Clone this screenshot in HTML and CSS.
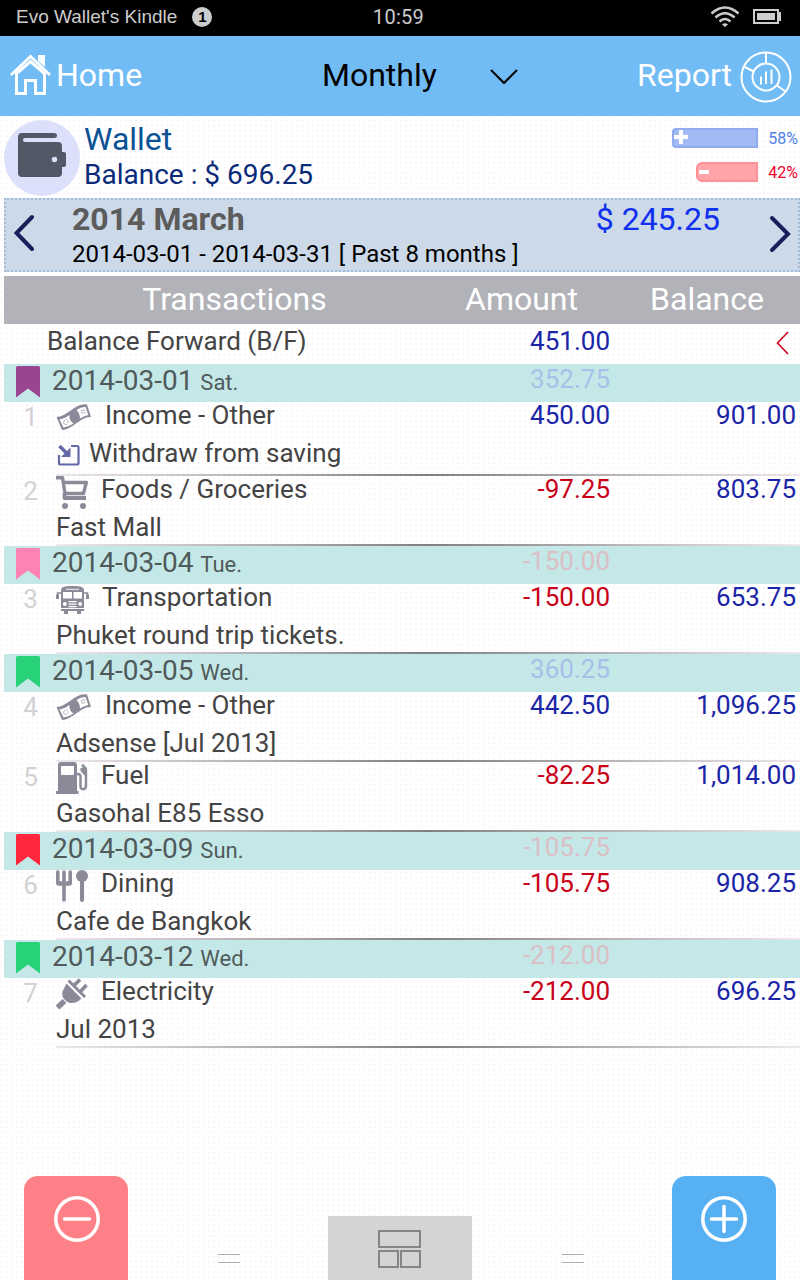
FILE: index.html
```html
<!DOCTYPE html>
<html lang="en">
<head>
  <meta charset="UTF-8" />
  <meta name="viewport" content="width=device-width, initial-scale=1.0" />
  <title>Evo Wallet</title>
  <link rel="stylesheet" href="styles.css">
</head>
<body>
  <svg class="defs" width="0" height="0">
    <symbol id="flag" viewBox="0 0 24 32"><path d="M1.500 0h21q1.500 0 1.500 1.500V31.500L12 22.500 0 31.500V1.500Q0 0 1.500 0z"/></symbol>
    <symbol id="cash" viewBox="0 0 36 28">
      <path d="M.5 14C11 14 20-1 31 1.500L35 14C25 13 16 27 6 27z" fill="#8b8a99"/>
      <path d="M3.500 16.500q5-.5 10-4.500-.5 6 4 8.500-5 3.500-10 4zM20.500 7q5-3.500 9-3l2.800 8q-4 .5-8.300 3.500 0-5-3.500-8.500z" fill="#fff"/>
      <path d="M7.500 18.500l3-2 2 2.500-2 2.500-2.500-.5zM25 8l3-1.500 1 3-2.500 1z" fill="none" stroke="#9c9ba9" stroke-width="1" stroke-dasharray="2 1"/>
    </symbol>
  </svg>

  <div class="statusbar">
    <div class="device">Evo Wallet's Kindle <span class="count">1</span></div>
    <div class="clock">10:59</div>
    <div class="status-icons">
      <svg width="30" height="22" viewBox="0 0 30 22" fill="none" stroke="#ccc" stroke-width="2.500">
        <path d="M1.500 7.500Q15-4.500 28.500 7.500M5.500 11.500Q15 3 24.500 11.500M9.500 15.500Q15 10.500 20.500 15.500"/>
        <path d="M12 18.500q3-2.500 6 0l-3 2.500z" fill="#ccc" stroke="none"/>
      </svg>
      <svg width="28" height="15" viewBox="0 0 28 15" fill="#ccc">
        <path d="M1 1h24v13H1z" fill="none" stroke="#ccc" stroke-width="2"/>
        <path d="M4 4h18v7H4zM26 3h2v9h-2z"/>
      </svg>
    </div>
  </div>

  <div class="topbar">
    <div class="home">
      <svg width="42" height="42" viewBox="0 0 42 42" fill="none" stroke="#fff">
        <path d="M1 21L20.500 2.500 40 21" stroke-width="2.800"/>
        <path d="M6.500 19.500V39.500h9V26.500h10v13h9V19.500L20.500 7.500z" stroke-width="3"/>
        <path d="M28 1h7v12l-7-6z" fill="#fff" stroke="none"/>
      </svg>
      <span>Home</span>
    </div>
    <div class="mode">
      <span>Monthly</span>
      <svg width="28" height="16" viewBox="0 0 28 16" fill="none" stroke="#000" stroke-width="2"><path d="M1 1l13 13L27 1"/></svg>
    </div>
    <div class="report">
      <span>Report</span>
      <svg width="52" height="52" viewBox="0 0 52 52" fill="none" stroke="#fff" stroke-width="2">
        <circle cx="26" cy="26" r="24.500"/>
        <circle cx="26" cy="26" r="13.500"/>
        <path d="M26 1.500v11M4.500 16l9.500 4.500M37 34.500l8.500 6M21 25.500v8M26 20.500v12.500M31.500 18.500V33"/>
      </svg>
    </div>
  </div>

  <div class="wallet">
    <div class="avatar">
      <svg width="48" height="44" viewBox="0 0 48 44" fill="#535866">
        <path d="M4 0h32q3 0 3 2.500T36 5H7q-2 0-2 2t2 2h33q4 0 4 4v6h2q2 0 2 2v11q0 2-2 2h-2v6q0 4-4 4H4q-4 0-4-4V4q0-4 4-4z"/>
        <circle cx="36.500" cy="26.500" r="2.700" fill="#dce0fa"/>
      </svg>
    </div>
    <div class="wallet-text">
      <div class="wallet-name">Wallet</div>
      <div class="wallet-balance">Balance : $ 696.25</div>
    </div>
    <div class="ratio">
      <div class="ratio-row plus">
        <div class="bar"><svg width="14" height="14" viewBox="0 0 14 14" fill="none" stroke="#fff" stroke-width="4"><path d="M0 7h14M7 0v14"/></svg></div>
        <span>58%</span>
      </div>
      <div class="ratio-row minus">
        <div class="bar"><svg width="10" height="14" viewBox="0 0 10 14" fill="none" stroke="#fff" stroke-width="4"><path d="M0 8h10"/></svg></div>
        <span>42%</span>
      </div>
    </div>
  </div>

  <div class="period">
    <svg class="prev" width="20" height="38" viewBox="0 0 20 38" fill="none" stroke="#181f5b" stroke-width="4" stroke-linecap="round"><path d="M18 3L2.500 19 18 35"/></svg>
    <div class="period-text">
      <div class="period-top"><b>2014 March</b><span class="period-sum">$ 245.25</span></div>
      <div class="period-range">2014-03-01 - 2014-03-31 [ Past 8 months ]</div>
    </div>
    <svg class="next" width="22" height="38" viewBox="0 0 22 38" fill="none" stroke="#181f5b" stroke-width="4" stroke-linecap="round"><path d="M3 3l16 16L3 35"/></svg>
  </div>

  <div class="table">
    <div class="thead">
      <span>Transactions</span><span>Amount</span><span>Balance</span>
    </div>

    <div class="forward">
      <span class="forward-name">Balance Forward (B/F)</span>
      <span class="num in">451.00</span>
      <svg width="13" height="24" viewBox="0 0 13 24" fill="none" stroke="#d0021b" stroke-width="1.600"><path d="M12 1L1.500 12 12 23"/></svg>
    </div>

    <div class="day">
      <svg class="flag purple"><use href="#flag"/></svg>
      <span class="date">2014-03-01 <small>Sat.</small></span>
      <span class="num day-in">352.75</span>
    </div>
    <div class="row row-tall">
      <span class="idx">1</span>
      <div class="cat">
        <svg class="cash" width="36" height="28"><use href="#cash"/></svg>
        <span>Income - Other</span>
      </div>
      <span class="num in">450.00</span>
      <span class="num in">901.00</span>
      <div class="note">
        <svg width="24" height="24" viewBox="0 0 24 24" fill="none" stroke="#6468a8" stroke-width="2.200">
          <path d="M3 12v8q0 1.500 1.500 1.500H21q1.500 0 1.500-1.500V4.500Q22.500 3 21 3h-6"/>
          <path d="M3.500 3l8 8" stroke-width="3.600"/>
          <path d="M14.500 4.500v9.500H5z" fill="#6468a8" stroke="none"/>
        </svg>
        <span>Withdraw from saving</span>
      </div>
    </div>
    <div class="row">
      <span class="idx">2</span>
      <div class="cat">
        <svg width="32" height="34" viewBox="0 0 32 34" fill="none" stroke="#8b8a99" stroke-width="3.400" stroke-linejoin="round">
          <path d="M0 1.700h6.500L9 17.500h18.500L30.300 6.500H8"/>
          <path d="M8.500 17v5h21.500" stroke-width="3.800"/>
          <circle cx="9" cy="30" r="3" fill="#8b8a99" stroke="none"/>
          <circle cx="27" cy="30" r="3" fill="#8b8a99" stroke="none"/>
        </svg>
        <span>Foods / Groceries</span>
      </div>
      <span class="num out">-97.25</span>
      <span class="num in">803.75</span>
      <div class="note">Fast Mall</div>
    </div>

    <div class="day">
      <svg class="flag pink"><use href="#flag"/></svg>
      <span class="date">2014-03-04 <small>Tue.</small></span>
      <span class="num day-out">-150.00</span>
    </div>
    <div class="row">
      <span class="idx">3</span>
      <div class="cat">
        <svg class="bus" width="33" height="28" viewBox="0 0 33 28" fill="#8b8a99">
          <path d="M9 .5Q16.500-.8 24 .5q4 .7 4 4V22H5V4.500q0-3.300 4-4zM5 23h23v2h-3v3h-4v-3h-9v3H8v-3H5z"/>
          <path d="M7 6h9v6.500H7zM17.500 6H26v6.500h-8.500zM12.500 15h8v1.200h-8zM12.500 17.500h8v1.200h-8zM12.500 20h8v1.200h-8z" fill="#fff"/>
          <circle cx="8.800" cy="18" r="1.900" fill="#fff"/><circle cx="24.200" cy="18" r="1.900" fill="#fff"/>
          <path d="M10 3.300h13" stroke="#fff" stroke-width=".9"/>
          <path d="M5 7H1.500v6M28 7h3.500v6" fill="none" stroke="#8b8a99" stroke-width="1.500"/>
          <path d="M0 8.500h3V13H0zM30 8.500h3V13h-3z"/>
        </svg>
        <span>Transportation</span>
      </div>
      <span class="num out">-150.00</span>
      <span class="num in">653.75</span>
      <div class="note">Phuket round trip tickets.</div>
    </div>

    <div class="day">
      <svg class="flag green"><use href="#flag"/></svg>
      <span class="date">2014-03-05 <small>Wed.</small></span>
      <span class="num day-in">360.25</span>
    </div>
    <div class="row">
      <span class="idx">4</span>
      <div class="cat">
        <svg class="cash" width="36" height="28"><use href="#cash"/></svg>
        <span>Income - Other</span>
      </div>
      <span class="num in">442.50</span>
      <span class="num in">1,096.25</span>
      <div class="note">Adsense [Jul 2013]</div>
    </div>
    <div class="row">
      <span class="idx">5</span>
      <div class="cat">
        <svg width="32" height="34" viewBox="0 0 32 34" fill="#8b8a99">
          <path fill-rule="evenodd" d="M5 0h13q3 0 3 3v26h1.500v3H0v-3h2V3q0-3 3-3zM6 4q-1 0-1 1v7q0 1 1 1h11q1 0 1-1V5q0-1-1-1z"/>
          <path d="M21 12h1q2.500 0 2.500 2.500V24q0 3.200 2.700 3.200T30 24V8l-4-5" fill="none" stroke="#8b8a99" stroke-width="2.400"/>
          <path d="M26 1l5 5v8h-2l-4.500-5V6H28z"/>
        </svg>
        <span>Fuel</span>
      </div>
      <span class="num out">-82.25</span>
      <span class="num in">1,014.00</span>
      <div class="note">Gasohal E85 Esso</div>
    </div>

    <div class="day">
      <svg class="flag red"><use href="#flag"/></svg>
      <span class="date">2014-03-09 <small>Sun.</small></span>
      <span class="num day-out">-105.75</span>
    </div>
    <div class="row">
      <span class="idx">6</span>
      <div class="cat">
        <svg width="32" height="34" viewBox="0 0 32 34" fill="none" stroke="#8b8a99" stroke-width="4" stroke-linecap="round">
          <path d="M1.800 2v11M8 2v28M14.200 2v11" stroke-width="3.600"/>
          <path d="M2.500 13.500h11" stroke-width="4.500"/>
          <path d="M26 10v20"/>
          <circle cx="26" cy="6" r="6" fill="#8b8a99" stroke="none"/>
        </svg>
        <span>Dining</span>
      </div>
      <span class="num out">-105.75</span>
      <span class="num in">908.25</span>
      <div class="note">Cafe de Bangkok</div>
    </div>

    <div class="day">
      <svg class="flag green"><use href="#flag"/></svg>
      <span class="date">2014-03-12 <small>Wed.</small></span>
      <span class="num day-out">-212.00</span>
    </div>
    <div class="row">
      <span class="idx">7</span>
      <div class="cat">
        <svg width="32" height="34" viewBox="0 0 32 34" fill="none" stroke="#8b8a99" stroke-width="3">
          <path d="M17.500 8L24 1.500M24 14l6.500-7" stroke-width="3.600"/>
          <path d="M12.500 2.500L29 19"/>
          <path d="M10.500 5.500L25.500 20.500Q21 25.500 14 25L10.500 23.500Q5 19.500 6.500 13.500z" fill="#8b8a99" stroke="none"/>
          <path d="M1.500 29.500l7-6.500" stroke-width="5.500"/>
        </svg>
        <span>Electricity</span>
      </div>
      <span class="num out">-212.00</span>
      <span class="num in">696.25</span>
      <div class="note">Jul 2013</div>
    </div>
  </div>

  <div class="bottombar">
    <button class="btn-add btn-expense">
      <svg width="46" height="46" viewBox="0 0 46 46" fill="none" stroke="#fff" stroke-width="3.500" stroke-linecap="round"><circle cx="23" cy="23" r="21.200"/><path d="M10.500 23h25"/></svg>
    </button>
    <div class="handle"></div>
    <div class="panel">
      <svg width="44" height="38" viewBox="0 0 44 38" fill="none" stroke="#858585" stroke-width="2"><path d="M1 1h41v16H1zM1 21h19v16H1zM23 21h19v16H23z"/></svg>
    </div>
    <div class="handle"></div>
    <button class="btn-add btn-income">
      <svg width="46" height="46" viewBox="0 0 46 46" fill="none" stroke="#fff" stroke-width="3.500" stroke-linecap="round"><circle cx="23" cy="23" r="21.200"/><path d="M10.500 23h25M23 10.500v25"/></svg>
    </button>
  </div>
</body>
</html>
```
FILE: styles.css
```css
* {
  box-sizing: border-box;
}

body {
  margin: 0;
  width: 800px;
  height: 1280px;
  display: flex;
  flex-direction: column;
  overflow: hidden;
  font-family: Roboto, sans-serif;
  font-size: 26px;
  color: #444;
  background: #fff radial-gradient(circle, #f7f3f5 1px, transparent 1.2px) 4px 4px / 5.2px 5.2px;
}

svg {
  display: block;
  flex: none;
}

.defs {
  position: absolute;
}

/* status bar */
.statusbar {
  height: 36px;
  display: grid;
  grid-template-columns: 1fr auto 1fr;
  align-items: center;
  padding: 0 19px 3px 16px;
  background: #000;
  color: #ccc;
  font-family: "Liberation Sans", sans-serif;
  font-size: 19px;
}

.device {
  display: flex;
  align-items: center;
}

.count {
  width: 20px;
  height: 20px;
  margin-left: 15px;
  border-radius: 50%;
  background: #ccc;
  color: #000;
  font-size: 15px;
  font-weight: bold;
  line-height: 20px;
  text-align: center;
}

.clock {
  font-family: Roboto, sans-serif;
  font-size: 20px;
  letter-spacing: 0.3px;
}

.status-icons {
  display: flex;
  justify-content: flex-end;
  align-items: center;
  gap: 13px;
}

/* top navigation */
.topbar {
  height: 80px;
  display: grid;
  grid-template-columns: 322px 1fr auto;
  align-items: center;
  padding-right: 8px;
  background: #72bcf5;
  color: #fff;
  font-size: 32px;
  line-height: 78px;
}

.home,
.mode,
.report {
  display: flex;
  align-items: center;
  height: 80px;
}

.home {
  padding-left: 10px;
  gap: 4px;
}

.home svg {
  margin-bottom: 3px;
}

.home span,
.mode span,
.report span {
  height: 80px;
}

.mode {
  color: #000;
  gap: 53px;
}

.mode svg {
  margin-top: 2px;
}

.report {
  gap: 8px;
}

.report svg {
  margin-top: 2px;
}

/* wallet summary */
.wallet {
  height: 82px;
  display: flex;
  padding: 4px 2px 0 4px;
}

.avatar {
  width: 76px;
  height: 76px;
  border-radius: 50%;
  padding: 13px 0 0 14px;
  background: #dce0fa;
}

.wallet-text {
  flex: 1;
  padding-left: 4px;
}

.wallet-name {
  font-size: 32px;
  line-height: 38px;
  color: #0b5394;
}

.wallet-balance {
  font-size: 28px;
  line-height: 33px;
  color: #0a2a7a;
}

.ratio {
  padding-top: 8px;
}

.ratio-row {
  display: flex;
  justify-content: flex-end;
  align-items: center;
  height: 20px;
  margin-bottom: 14px;
  font-size: 16px;
}

.ratio-row span {
  width: 40px;
  text-align: right;
}

.bar {
  height: 20px;
  border: 2px solid;
}

.plus {
  color: #5080e8;
}

.plus .bar {
  width: 86px;
  background: #a2bbf5;
  border-color: #8facf0;
  border-radius: 4px 0 0 4px;
}

.minus {
  color: #f0002a;
}

.minus .bar {
  width: 62px;
  background: #ffa4a8;
  border-color: #ff9095;
  border-radius: 6px 0 0 6px;
  padding: 0 1px;
}

/* period selector */
.period {
  height: 74px;
  margin: 0 0 4px 4px;
  display: flex;
  align-items: center;
  border: 2px dotted #a3bdd8;
  background: #cbd9e9;
}

.prev {
  margin: 0 0 5px 8px;
}

.period-text {
  flex: 1;
  align-self: flex-start;
  padding-left: 38px;
}

.period-top {
  display: flex;
  justify-content: space-between;
  font-size: 32px;
  line-height: 38px;
  color: #5c5c5c;
}

.period-sum {
  margin-right: 49px;
  color: #1030f0;
}

.period-range {
  font-size: 24px;
  line-height: 32px;
  color: #000;
}

.next {
  margin: 0 7px 3px 0;
}

/* transactions */
.table {
  margin-left: 4px;
}

.thead {
  height: 48px;
  display: grid;
  grid-template-columns: 461px 112px 1fr;
  text-align: center;
  font-size: 32px;
  line-height: 46px;
  background: #b2b3b9;
  color: #fff;
}

.thead span:last-child {
  padding-left: 37px;
}

.forward,
.day,
.row {
  display: grid;
  grid-template-columns: 52px 384px 170px 1fr;
  padding-right: 4px;
}

.forward {
  height: 40px;
  line-height: 34px;
}

.forward-name {
  grid-column: 1 / 3;
  padding-left: 43px;
}

.forward svg {
  justify-self: end;
  margin: 7px 7px 0 0;
}

.num {
  text-align: right;
}

.in {
  color: #1a25a8;
}

.out {
  color: #c80018;
}

.day {
  height: 38px;
  grid-template-columns: 48px 388px 170px 1fr;
  background: #c4e8e8;
  line-height: 30px;
}

.day-in {
  color: #a8c0e8;
}

.day-out {
  color: #dbbfc4;
}

.flag {
  width: 24px;
  height: 32px;
  margin: 2px 0 0 12px;
}

.purple { fill: #9b4492; }
.pink { fill: #ff82b4; }
.green { fill: #28d278; }
.red { fill: #ff273c; }

.date {
  font-size: 28px;
  line-height: 33px;
  color: #505a5a;
}

.date small {
  font-size: 22px;
}

.row {
  height: 70px;
  grid-template-rows: 26px 1fr;
  line-height: 26px;
  background: linear-gradient(to right, #eee7ec, #808080 50%, #eee7ec) 52px 100% / 744px 2px no-repeat;
}

.row-tall {
  height: 74px;
}

.idx {
  padding: 2px 0 0 1px;
  text-align: center;
  color: #d3d1d4;
}

.cat {
  display: flex;
  align-items: flex-start;
  height: 26px;
  gap: 13px;
}

.cash {
  margin-top: 1px;
}

.bus {
  margin-top: 2px;
}

.note {
  grid-column: 2 / 5;
  display: flex;
  gap: 9px;
  padding-top: 8px;
  line-height: 34px;
}

.note svg {
  margin: 7px 0 0;
}

/* bottom actions */
.bottombar {
  margin-top: auto;
  height: 104px;
  display: flex;
  justify-content: space-between;
  align-items: flex-end;
  padding: 0 24px;
}

.btn-add {
  width: 104px;
  height: 104px;
  padding: 20px 28px 38px 30px;
  border: none;
  border-radius: 14px 14px 0 0;
  cursor: pointer;
}

.btn-expense {
  background: #ff8086;
}

.btn-income {
  background: #57b0f2;
  padding: 20px 29px 38px;
}

.handle {
  width: 22px;
  height: 9px;
  margin: 0 0 17px 2px;
  border: solid #b0b0b0;
  border-width: 1px 0;
}

.panel {
  width: 144px;
  height: 64px;
  padding: 14px 50px;
  background: #d5d3d6;
}
```
